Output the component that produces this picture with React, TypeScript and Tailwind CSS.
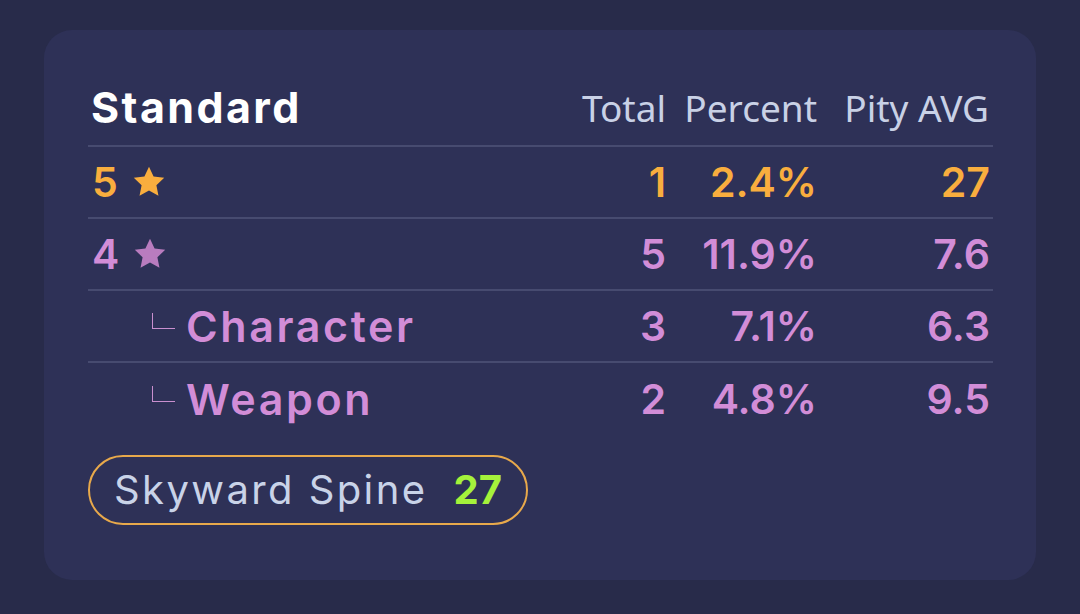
const rows = [
  { label: "5", star: true, total: "1", pct: "2.4%", avg: "27", tone: "gold" },
  { label: "4", star: true, total: "5", pct: "11.9%", avg: "7.6", tone: "purple" },
  { label: "Character", sub: true, total: "3", pct: "7.1%", avg: "6.3", tone: "purple" },
  { label: "Weapon", sub: true, total: "2", pct: "4.8%", avg: "9.5", tone: "purple" },
];

const Star = ({ color }: { color: string }) => (
  <svg width="36" height="34" viewBox="0 0 24 23" className="shrink-0">
    <path
      d="M12 1.2l3.1 6.6 7.2.9-5.3 5 1.4 7.1L12 17.3l-6.4 3.5 1.4-7.1-5.3-5 7.2-.9z"
      fill={color}
    />
  </svg>
);

export default function App() {
  return (
    <div
      className="h-[614px] w-full bg-[#282b4a] px-[44px] pt-[30px]"
      style={{ fontFamily: "Inter, 'Noto Sans', sans-serif" }}
    >
      <div className="flex h-[550px] flex-col rounded-[28px] bg-[#2e3157] pl-[44px] pr-[43px] pt-[45px]">
        <div className="flex h-[72px] items-center border-b-2 border-[#474b70] pb-[6px]">
          <div className="flex-1 pl-[3px] text-[43px] font-bold leading-none tracking-[2.4px] text-white">
            Standard
          </div>
          <div
            className="flex items-center text-[37px] leading-none text-[#c9d1e6]"
            style={{ fontFamily: "'Noto Sans', sans-serif" }}
          >
            <span className="w-[120px] text-right">Total</span>
            <span className="w-[151px] text-right">Percent</span>
            <span className="w-[176px] pr-[4px] text-right">Pity AVG</span>
          </div>
        </div>

        {rows.map((r, i) => {
          const color = r.tone === "gold" ? "text-[#f9ae3e]" : "text-[#d28dd7]";
          return (
            <div
              key={i}
              className={`flex h-[72px] items-center ${
                i < rows.length - 1 ? "border-b-2 border-[#474b70]" : ""
              } ${color} text-[41px] font-semibold leading-none`}
            >
              <div className="flex flex-1 items-center">
                {r.sub ? (
                  <>
                    <span className="ml-[64px] mr-[11px] mb-[10px] h-[16px] w-[23px] border-b-[1.5px] border-l-[1.5px] border-[#c98fcf]" />
                    <span className="text-[43px] tracking-[2.6px]">{r.label}</span>
                  </>
                ) : (
                  <>
                    <span className="ml-[4px] mr-[13px]">{r.label}</span>
                    <Star color={r.tone === "gold" ? "#f9ae3e" : "#b97cbf"} />
                  </>
                )}
              </div>
              <span className="w-[120px] text-right">{r.total}</span>
              <span className="w-[151px] text-right">{r.pct}</span>
              <span className="w-[176px] pr-[3px] text-right">{r.avg}</span>
            </div>
          );
        })}

        <div className="mt-[20px] flex">
          <div className="flex h-[70px] items-center gap-[26px] rounded-full border-2 border-[#e8a94b] pl-[24px] pr-[24px]">
            <span className="text-[40px] leading-none tracking-[2.4px] text-[#c9d3e8]">Skyward Spine</span>
            <span className="text-[40px] font-bold leading-none text-[#a5f23b]">27</span>
          </div>
        </div>
      </div>
    </div>
  );
}
